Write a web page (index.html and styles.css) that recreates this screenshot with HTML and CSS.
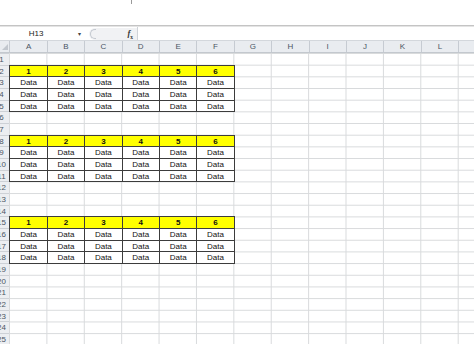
FILE: index.html
```html
<!DOCTYPE html>
<html lang="en">
<head>
    <meta charset="UTF-8">
    <title>Sheet1</title>
    <link rel="stylesheet" href="styles.css">
</head>
<body>
<div class="ribbon"><span class="ribbon-mark"></span></div>
<div class="formula-bar">
    <div class="name-box"><span class="name">H13</span><span class="drop">&#9662;</span></div>
    <div class="fx-box"><span class="grip"></span><span class="fx"><i>f</i><sub>x</sub></span></div>
    <div class="formula-input"></div>
</div>
<div class="sheet">
    <div class="corner"><span class="corner-tri"></span></div>
    <div class="col-heads">
        <div>A</div><div>B</div><div>C</div><div>D</div><div>E</div><div>F</div>
        <div>G</div><div>H</div><div>I</div><div>J</div><div>K</div><div>L</div>
        <div></div>
    </div>
    <div class="row-heads">
        <div><span>1</span></div><div><span>2</span></div><div><span>3</span></div><div><span>4</span></div><div><span>5</span></div>
        <div><span>6</span></div><div><span>7</span></div><div><span>8</span></div><div><span>9</span></div><div><span>10</span></div>
        <div><span>11</span></div><div><span>12</span></div><div><span>13</span></div><div><span>14</span></div><div><span>15</span></div>
        <div><span>16</span></div><div><span>17</span></div><div><span>18</span></div><div><span>19</span></div><div><span>20</span></div>
        <div><span>21</span></div><div><span>22</span></div><div><span>23</span></div><div><span>24</span></div><div><span>25</span></div>
    </div>
    <div class="cells">
        <div class="block block-1">
            <div class="hd">1</div><div class="hd">2</div><div class="hd">3</div><div class="hd">4</div><div class="hd">5</div><div class="hd">6</div>
            <div>Data</div><div>Data</div><div>Data</div><div>Data</div><div>Data</div><div>Data</div>
            <div>Data</div><div>Data</div><div>Data</div><div>Data</div><div>Data</div><div>Data</div>
            <div>Data</div><div>Data</div><div>Data</div><div>Data</div><div>Data</div><div>Data</div>
        </div>
        <div class="block block-2">
            <div class="hd">1</div><div class="hd">2</div><div class="hd">3</div><div class="hd">4</div><div class="hd">5</div><div class="hd">6</div>
            <div>Data</div><div>Data</div><div>Data</div><div>Data</div><div>Data</div><div>Data</div>
            <div>Data</div><div>Data</div><div>Data</div><div>Data</div><div>Data</div><div>Data</div>
            <div>Data</div><div>Data</div><div>Data</div><div>Data</div><div>Data</div><div>Data</div>
        </div>
        <div class="block block-3">
            <div class="hd">1</div><div class="hd">2</div><div class="hd">3</div><div class="hd">4</div><div class="hd">5</div><div class="hd">6</div>
            <div>Data</div><div>Data</div><div>Data</div><div>Data</div><div>Data</div><div>Data</div>
            <div>Data</div><div>Data</div><div>Data</div><div>Data</div><div>Data</div><div>Data</div>
            <div>Data</div><div>Data</div><div>Data</div><div>Data</div><div>Data</div><div>Data</div>
        </div>
    </div>
</div>
</body>
</html>
```

FILE: styles.css
```css
*{
    margin: 0;
    padding: 0;
    box-sizing: border-box;
}
body{
    width: 474px;
    height: 344px;
    overflow: hidden;
    background: #fff;
    font-family: "Liberation Sans", Arial, sans-serif;
}
.ribbon{
    height: 26px;
    border-bottom: 1px solid #c4c4c4;
}
.ribbon-mark{
    display: block;
    width: 1px;
    height: 4px;
    margin-left: 131px;
    background: #9a9a9a;
}
/* formula bar */
.formula-bar{
    display: flex;
    align-items: center;
    height: 15px;
    border-top: 1px solid #e4e4e4;
    border-bottom: 1px solid #d3d7dc;
}
.name-box{
    display: flex;
    align-items: center;
    width: 86px;
    height: 100%;
    font-size: 8px;
    color: #222;
}
.name{
    width: 72px;
    text-align: center;
}
.drop{
    font-size: 6px;
    color: #444;
    margin-left: 6px;
}
.fx-box{
    display: flex;
    align-items: center;
    justify-content: space-between;
    width: 48px;
    height: 12px;
    margin-left: 3px;
    padding: 0 4px 0 1px;
    background: #f1f2f4;
    border-radius: 6px 0 0 6px;
}
.grip{
    width: 6px;
    height: 10px;
    border: 1px solid #c3c8cf;
    border-right: none;
    border-radius: 5px 0 0 5px;
}
.fx{
    font-family: "Liberation Serif", serif;
    font-size: 8.5px;
    font-weight: bold;
    color: #333;
}
.fx sub{
    font-size: 5.5px;
}
.formula-input{
    flex: 1;
    height: 100%;
    border-left: 1px solid #cfd3d8;
}
/* sheet */
.sheet{
    display: grid;
    grid-template-columns: 9.4px 1fr;
    grid-template-rows: 12px 1fr;
}
.corner{
    display: flex;
    align-items: flex-end;
    justify-content: flex-end;
    padding: 0 1px 2px 0;
    background: #e9ecf0;
    border-bottom: 1px solid #c3c8ce;
}
.corner-tri{
    width: 0;
    height: 0;
    border-left: 6px solid transparent;
    border-bottom: 6px solid #c2c7ce;
}
.col-heads{
    display: grid;
    grid-template-columns: repeat(12, 37.4px) 1fr;
    background: #e9ecf0;
    border-bottom: 1px solid #c3c8ce;
}
.col-heads>div{
    display: flex;
    align-items: center;
    justify-content: center;
    border-left: 1px solid #c6cbd2;
    font-size: 8px;
    color: #4a5563;
}
.row-heads{
    display: grid;
    grid-auto-rows: 11.68px;
    background: #eceef1;
    overflow: hidden;
}
.row-heads>div{
    display: flex;
    align-items: center;
    border-top: 1px solid #cdd1d6;
    overflow: hidden;
}
.row-heads span{
    flex: none;
    width: 20px;
    margin-left: -8.5px;
    text-align: center;
    font-size: 8px;
    color: #4a5563;
}
.cells{
    display: grid;
    grid-template-columns: repeat(12, 37.4px) 1fr;
    grid-template-rows: repeat(25, 11.68px);
    background-image:
        linear-gradient(to right, #d8dadc 1px, transparent 1px),
        linear-gradient(to bottom, #d8dadc 1px, transparent 1px);
    background-size: 37.4px 11.68px;
}
.block{
    display: grid;
    grid-column: 1 / span 6;
    grid-template-columns: repeat(6, 1fr);
    grid-template-rows: repeat(4, 1fr);
    margin: 0 -1px -1px 0;
    border-right: 1px solid #3c3c3c;
    border-bottom: 1px solid #3c3c3c;
}
.block-1{
    grid-row: 2 / span 4;
}
.block-2{
    grid-row: 8 / span 4;
}
.block-3{
    grid-row: 15 / span 4;
}
.block>div{
    display: flex;
    align-items: center;
    justify-content: center;
    border-left: 1px solid #3c3c3c;
    border-top: 1px solid #3c3c3c;
    background: #fff;
    font-size: 8px;
    color: #111;
}
.block>.hd{
    background: #ffff00;
    font-weight: bold;
}
```
